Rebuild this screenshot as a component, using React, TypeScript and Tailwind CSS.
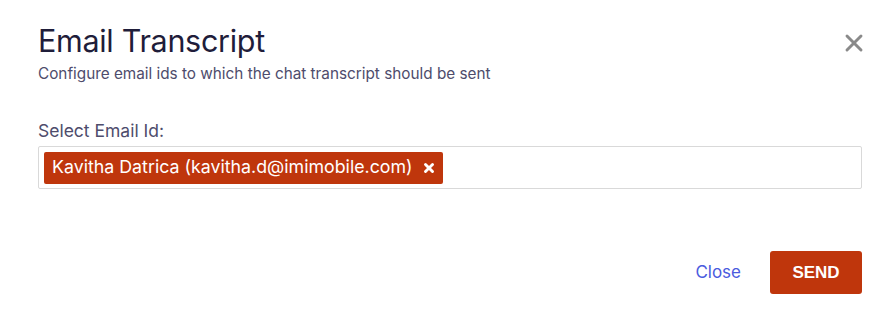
import { X } from 'lucide-react';

export default function App() {
  return (
    <div className="w-[895px] h-[321px] bg-white font-['Inter',sans-serif] relative">
      <div className="px-[38px] pt-[21px]">
        <h1 className="text-[30.5px] leading-[40px] text-[#1f1d3a] tracking-[-0.3px]">Email Transcript</h1>
        <p className="text-[15.3px] leading-[20px] text-[#4e4c6c] mt-[3px]">
          Configure email ids to which the chat transcript should be sent
        </p>
        <label className="block mt-[36px] text-[17.5px] leading-[22px] text-[#4e4c6c]">Select Email Id:</label>
        <div className="mt-[4px] w-[824px] h-[43px] border border-[#d9d9d9] rounded-[2px] px-[5px] flex items-center">
          <span className="inline-flex items-center h-[32px] bg-[#bf360c] rounded-[2px] pl-[8px] pr-[7px] text-white text-[17.8px]">
            Kavitha Datrica (kavitha.d@imimobile.com)
            <X className="w-[14px] h-[14px] ml-[9px]" strokeWidth={5} />
          </span>
        </div>
        <div className="flex justify-end items-center mt-[62px] w-[824px]">
          <button className="text-[#4a5bde] text-[17px] mr-[29px]">Close</button>
          <button className="w-[92px] h-[43px] bg-[#bf360c] rounded-[3px] text-white font-bold text-[17px] font-['Liberation_Sans',sans-serif]">
            SEND
          </button>
        </div>
      </div>
      <button className="absolute left-[840px] top-[29px] text-[#8a8a8a]">
        <X className="w-[28px] h-[28px]" strokeWidth={2.5} />
      </button>
    </div>
  );
}
